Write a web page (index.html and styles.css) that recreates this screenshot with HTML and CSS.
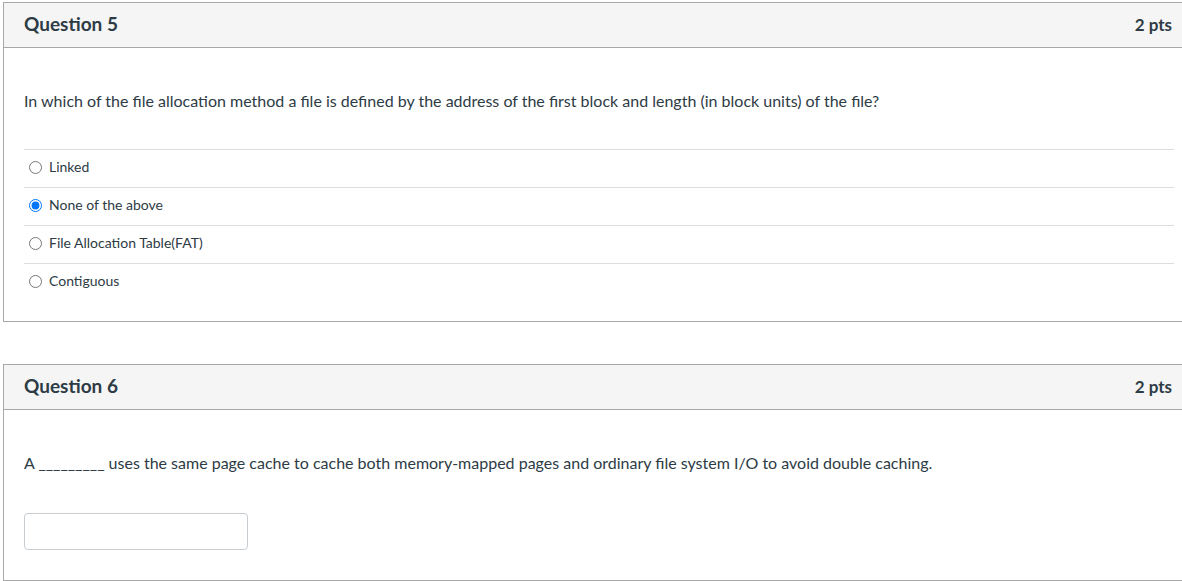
FILE: index.html
```html
<!DOCTYPE html>
<html lang="en">

<head>
    <meta charset="UTF-8">
    <meta name="viewport" content="width=device-width, initial-scale=1.0">
    <title>Quiz</title>
    <link rel="stylesheet" href="styles.css">
</head>

<body>
    <div class="question">
        <div class="header">
            <span class="title">Question 5</span>
            <span class="pts">2 pts</span>
        </div>
        <div class="content">
            <p class="text">In which of the file allocation method a file is defined by the address of the first block and length (in block units) of the file?</p>
            <div class="answers">
                <label class="answer"><input type="radio" name="q5"> Linked</label>
                <label class="answer"><input type="radio" name="q5" checked> None of the above</label>
                <label class="answer"><input type="radio" name="q5"> File Allocation Table(FAT)</label>
                <label class="answer"><input type="radio" name="q5"> Contiguous</label>
            </div>
        </div>
    </div>

    <div class="question">
        <div class="header">
            <span class="title">Question 6</span>
            <span class="pts">2 pts</span>
        </div>
        <div class="content">
            <p class="text">A _________ uses the same page cache to cache both memory-mapped pages and ordinary file system I/O to avoid double caching.</p>
            <input class="blank" type="text">
        </div>
    </div>
</body>

</html>
```

FILE: styles.css
```css
body {
    margin: 0;
    padding: 2px 0 0 3px;
    font-family: 'Lato', sans-serif;
    color: #2d3b45;
    background: #fff;
    overflow: hidden;
}

.question {
    border: 1px solid #a8a8a8;
    border-right: none;
    margin-bottom: 42px;
}

.header {
    display: flex;
    justify-content: space-between;
    align-items: center;
    height: 44px;
    padding: 0 10px 0 20px;
    background-color: #f5f5f5;
    border-bottom: 1px solid #a8a8a8;
}

.title {
    font-size: 19px;
    font-weight: bold;
    margin-top: -4px;
}

.pts {
    font-size: 17px;
    font-weight: bold;
    color: #2d3b45;
    margin-top: -2px;
}

.content {
    padding: 0 8px 20px 20px;
}

.text {
    margin: 0;
    padding: 43px 0 0;
    font-size: 16px;
    line-height: 20px;
}

.answers {
    margin-top: 38px;
}

.answer {
    display: flex;
    align-items: center;
    box-sizing: border-box;
    height: 38px;
    padding-bottom: 4px;
    border-top: 1px solid #ddd;
    font-size: 14px;
}

.answer input {
    width: 13px;
    height: 13px;
    margin: 2px 7px 0 5px;
}

.blank {
    display: block;
    margin-top: 40px;
    width: 224px;
    height: 37px;
    box-sizing: border-box;
    border: 1px solid #c7cdd1;
    border-radius: 4px;
    margin-bottom: 10px;
}
```
